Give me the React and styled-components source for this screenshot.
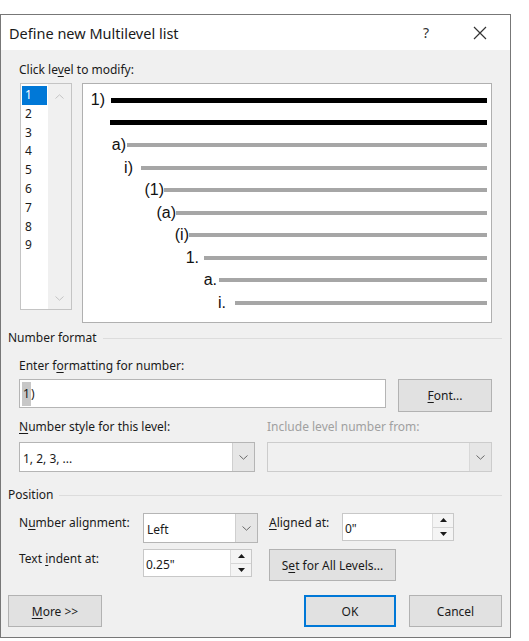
import React from "react";
import styled, { createGlobalStyle } from "styled-components";

const GlobalStyle = createGlobalStyle`
  html, body {
    margin: 0;
    padding: 0;
    background: #ffffff;
  }
  body {
    font-family: "Noto Sans", "Open Sans", sans-serif;
    font-size: 12px;
    color: #1a1a1a;
  }
`;

const Dialog = styled.div`
  box-sizing: border-box;
  margin-top: 14px;
  width: 511px;
  height: 624px;
  border: 1px solid #777777;
  background: #f0f0f0;
  display: flex;
  flex-direction: column;
`;

const TitleBar = styled.div`
  height: 35px;
  background: #ffffff;
  display: flex;
  align-items: center;
  padding-left: 8px;
  padding-right: 6px;
`;

const Title = styled.div`
  flex: 1;
  font-size: 14.5px;
  color: #1a1a1a;
`;

const TitleButton = styled.div`
  width: ${(p) => p.$w}px;
  display: flex;
  justify-content: center;
  align-items: center;
  font-size: 14px;
  color: #333333;
`;

const Body = styled.div`
  flex: 1;
  display: flex;
  flex-direction: column;
  padding: 12px 0 9px 7px;
`;

const Label = styled.div`
  line-height: 16px;
  white-space: nowrap;
  color: ${(p) => (p.$disabled ? "#a0a0a0" : "#1a1a1a")};
  margin-top: ${(p) => p.$mt || 0}px;
  margin-left: ${(p) => p.$ml || 0}px;
`;

const Key = styled.span`
  text-decoration: underline;
  text-underline-offset: 2px;
`;

const LevelRow = styled.div`
  display: flex;
  gap: 10px;
  margin: 5px 0 0 12px;
  height: 240px;
`;

const LevelList = styled.div`
  box-sizing: border-box;
  width: 52px;
  height: 227px;
  border: 1px solid #c4c4c4;
  display: flex;
  background: #ffffff;
`;

const LevelItems = styled.div`
  width: 27px;
  padding: 2px 1px 0 1px;
  box-sizing: border-box;
`;

const LevelItem = styled.div`
  height: 18.8px;
  line-height: 18.8px;
  padding-left: 3px;
  background: ${(p) => (p.$selected ? "#0078d7" : "transparent")};
  color: ${(p) => (p.$selected ? "#ffffff" : "#1a1a1a")};
`;

const ScrollTrack = styled.div`
  flex: 1;
  background: #f0f0f0;
  display: flex;
  flex-direction: column;
  justify-content: space-between;
  align-items: center;
  padding: 10px 0 8px;
`;

const Preview = styled.div`
  box-sizing: border-box;
  width: 410px;
  height: 240px;
  border: 1px solid #b0b0b0;
  background: #ffffff;
  padding: 5px 4px 0 0;
  font-family: "Liberation Sans", Arial, sans-serif;
  font-size: 16px;
  color: #111111;
`;

const PreviewLine = styled.div`
  display: flex;
  align-items: center;
  height: 22.5px;
`;

const NumberText = styled.div`
  box-sizing: border-box;
  width: ${(p) => p.$start}px;
  padding-right: ${(p) => p.$gap}px;
  text-align: right;
  white-space: nowrap;
`;

const Bar = styled.div`
  flex: 1;
  height: ${(p) => (p.$dark ? 5 : 4)}px;
  background: ${(p) => (p.$dark ? "#000000" : "#a6a6a6")};
`;

const GroupHeader = styled.div`
  display: flex;
  align-items: center;
  gap: 6px;
  line-height: 16px;
  margin-top: ${(p) => p.$mt}px;
  padding-right: 8px;
`;

const GroupRule = styled.div`
  flex: 1;
  height: 1px;
  background: #dcdcdc;
`;

const Indent = styled.div`
  padding-left: 11px;
  display: flex;
  flex-direction: column;
`;

const FormatRow = styled.div`
  display: flex;
  align-items: flex-start;
  gap: 12px;
  margin-top: 5px;
`;

const TextBox = styled.div`
  box-sizing: border-box;
  width: ${(p) => p.$w}px;
  height: ${(p) => p.$h || 28}px;
  border: 1px solid #b5b5b5;
  background: #ffffff;
  display: flex;
  align-items: center;
  padding-left: 2px;
`;

const Selected = styled.span`
  background: #c7c7c7;
  line-height: 24px;
  padding: 0 1px;
`;

const Button = styled.div`
  box-sizing: border-box;
  width: ${(p) => p.$w}px;
  height: ${(p) => p.$h || 32}px;
  background: #e1e1e1;
  border: 1px solid ${(p) => (p.$primary ? "#0078d7" : "#b2b2b2")};
  box-shadow: ${(p) => (p.$primary ? "inset 0 0 0 1px #0078d7" : "none")};
  display: flex;
  align-items: center;
  justify-content: center;
  white-space: nowrap;
`;

const TwoCols = styled.div`
  display: grid;
  grid-template-columns: 236px 225px;
  column-gap: 12px;
  margin-top: 7px;
`;

const Select = styled.div`
  box-sizing: border-box;
  width: ${(p) => p.$w}px;
  height: 30px;
  margin-top: ${(p) => p.$mt || 0}px;
  border: 1px solid ${(p) => (p.$disabled ? "#cccccc" : "#b5b5b5")};
  background: ${(p) => (p.$disabled ? "#f0f0f0" : "#ffffff")};
  display: flex;
`;

const SelectValue = styled.div`
  flex: 1;
  display: flex;
  align-items: center;
  padding-left: 3px;
  padding-top: 2px;
`;

const SelectArrow = styled.div`
  width: 21px;
  background: #e6e6e6;
  border-left: 1px solid ${(p) => (p.$disabled ? "#d8d8d8" : "#cfcfcf")};
  display: flex;
  align-items: center;
  justify-content: center;
`;

const PositionGrid = styled.div`
  display: grid;
  grid-template-columns: 124px 126px 73px auto;
  grid-template-rows: 30px 32px;
  row-gap: 6px;
  margin-top: 10px;
  align-items: start;
`;

const GridLabel = styled.div`
  line-height: 16px;
  margin-top: 2px;
  white-space: nowrap;
`;

const Spin = styled.div`
  box-sizing: border-box;
  width: ${(p) => p.$w}px;
  height: 28px;
  border: 1px solid #c8c8c8;
  background: #ffffff;
  display: flex;
`;

const SpinValue = styled.div`
  flex: 1;
  display: flex;
  align-items: center;
  padding-left: 2px;
  padding-top: 2px;
`;

const SpinButtons = styled.div`
  width: 20px;
  display: flex;
  flex-direction: column;
  border-left: 1px solid #dcdcdc;
  background: #f4f4f4;
`;

const SpinButton = styled.div`
  flex: 1;
  display: flex;
  align-items: center;
  justify-content: center;
  & + & {
    border-top: 1px solid #d6d6d6;
  }
`;

const SpanCell = styled.div`
  grid-column: 3 / 5;
`;

const Footer = styled.div`
  display: flex;
  margin-top: 14px;
  padding-right: 8px;
  gap: 13px;
`;

const Spacer = styled.div`
  flex: 1;
`;

function Chevron({ up, color = "#6a6a6a" }) {
  return (
    <svg width="9" height="5" viewBox="0 0 9 5">
      <polyline
        points={up ? "0.5,4.5 4.5,0.8 8.5,4.5" : "0.5,0.5 4.5,4.2 8.5,0.5"}
        fill="none"
        stroke={color}
        strokeWidth="1"
      />
    </svg>
  );
}

function Triangle({ up }) {
  return (
    <svg width="7" height="4" viewBox="0 0 7 4">
      <polygon points={up ? "0,4 3.5,0 7,4" : "0,0 3.5,4 7,0"} fill="#1a1a1a" />
    </svg>
  );
}

const levels = ["1", "2", "3", "4", "5", "6", "7", "8", "9"];

const previewLines = [
  { label: "1)", start: 28, gap: 6, dark: true },
  { label: "", start: 27, gap: 0, dark: true },
  { label: "a)", start: 44, gap: 1 },
  { label: "i)", start: 58, gap: 8 },
  { label: "(1)", start: 81, gap: 0 },
  { label: "(a)", start: 93, gap: 0 },
  { label: "(i)", start: 106, gap: 0 },
  { label: "1.", start: 121, gap: 5 },
  { label: "a.", start: 136, gap: 2 },
  { label: "i.", start: 152, gap: 9 },
];

export default function App() {
  return (
    <>
      <GlobalStyle />
      <Dialog>
        <TitleBar>
          <Title>Define new Multilevel list</Title>
          <TitleButton $w={60}>?</TitleButton>
          <TitleButton $w={48}>
            <svg width="14" height="14" viewBox="0 0 14 14">
              <path d="M1 1 L13 13 M13 1 L1 13" stroke="#333333" strokeWidth="1.2" />
            </svg>
          </TitleButton>
        </TitleBar>

        <Body>
          <Label $ml={11}>
            Click le<Key>v</Key>el to modify:
          </Label>

          <LevelRow>
            <LevelList>
              <LevelItems>
                {levels.map((l) => (
                  <LevelItem key={l} $selected={l === "1"}>
                    {l}
                  </LevelItem>
                ))}
              </LevelItems>
              <ScrollTrack>
                <Chevron up color="#c4c4c4" />
                <Chevron color="#c4c4c4" />
              </ScrollTrack>
            </LevelList>
            <Preview>
              {previewLines.map((line, i) => (
                <PreviewLine key={i}>
                  <NumberText $start={line.start} $gap={line.gap}>
                    {line.label}
                  </NumberText>
                  <Bar $dark={line.dark} />
                </PreviewLine>
              ))}
            </Preview>
          </LevelRow>

          <GroupHeader $mt={7}>
            Number format
            <GroupRule />
          </GroupHeader>

          <Indent>
            <Label $mt={12}>
              Enter f<Key>o</Key>rmatting for number:
            </Label>
            <FormatRow>
              <TextBox $w={367} $h={29}>
                <Selected>1</Selected>)
              </TextBox>
              <Button $w={94} $h={33}>
                <span>
                  <Key>F</Key>ont...
                </span>
              </Button>
            </FormatRow>

            <TwoCols>
              <Label>
                <Key>N</Key>umber style for this level:
              </Label>
              <Label $disabled>Include level number from:</Label>
              <Select $w={236} $mt={7}>
                <SelectValue>1, 2, 3, ...</SelectValue>
                <SelectArrow>
                  <Chevron />
                </SelectArrow>
              </Select>
              <Select $w={225} $mt={7} $disabled>
                <SelectValue />
                <SelectArrow $disabled>
                  <Chevron />
                </SelectArrow>
              </Select>
            </TwoCols>
          </Indent>

          <GroupHeader $mt={15}>
            Position
            <GroupRule />
          </GroupHeader>

          <Indent>
            <PositionGrid>
              <GridLabel>
                N<Key>u</Key>mber alignment:
              </GridLabel>
              <Select $w={115}>
                <SelectValue>Left</SelectValue>
                <SelectArrow>
                  <Chevron />
                </SelectArrow>
              </Select>
              <GridLabel>
                <Key>A</Key>ligned at:
              </GridLabel>
              <Spin $w={112}>
                <SpinValue>0"</SpinValue>
                <SpinButtons>
                  <SpinButton>
                    <Triangle up />
                  </SpinButton>
                  <SpinButton>
                    <Triangle />
                  </SpinButton>
                </SpinButtons>
              </Spin>

              <GridLabel>
                Text <Key>i</Key>ndent at:
              </GridLabel>
              <Spin $w={109}>
                <SpinValue>0.25"</SpinValue>
                <SpinButtons>
                  <SpinButton>
                    <Triangle up />
                  </SpinButton>
                  <SpinButton>
                    <Triangle />
                  </SpinButton>
                </SpinButtons>
              </Spin>
              <SpanCell>
                <Button $w={127}>
                  <span>
                    S<Key>e</Key>t for All Levels...
                  </span>
                </Button>
              </SpanCell>
            </PositionGrid>
          </Indent>

          <Footer>
            <Button $w={94}>
              <span>
                <Key>M</Key>ore &gt;&gt;
              </span>
            </Button>
            <Spacer />
            <Button $w={92} $primary>
              OK
            </Button>
            <Button $w={93}>Cancel</Button>
          </Footer>
        </Body>
      </Dialog>
    </>
  );
}
